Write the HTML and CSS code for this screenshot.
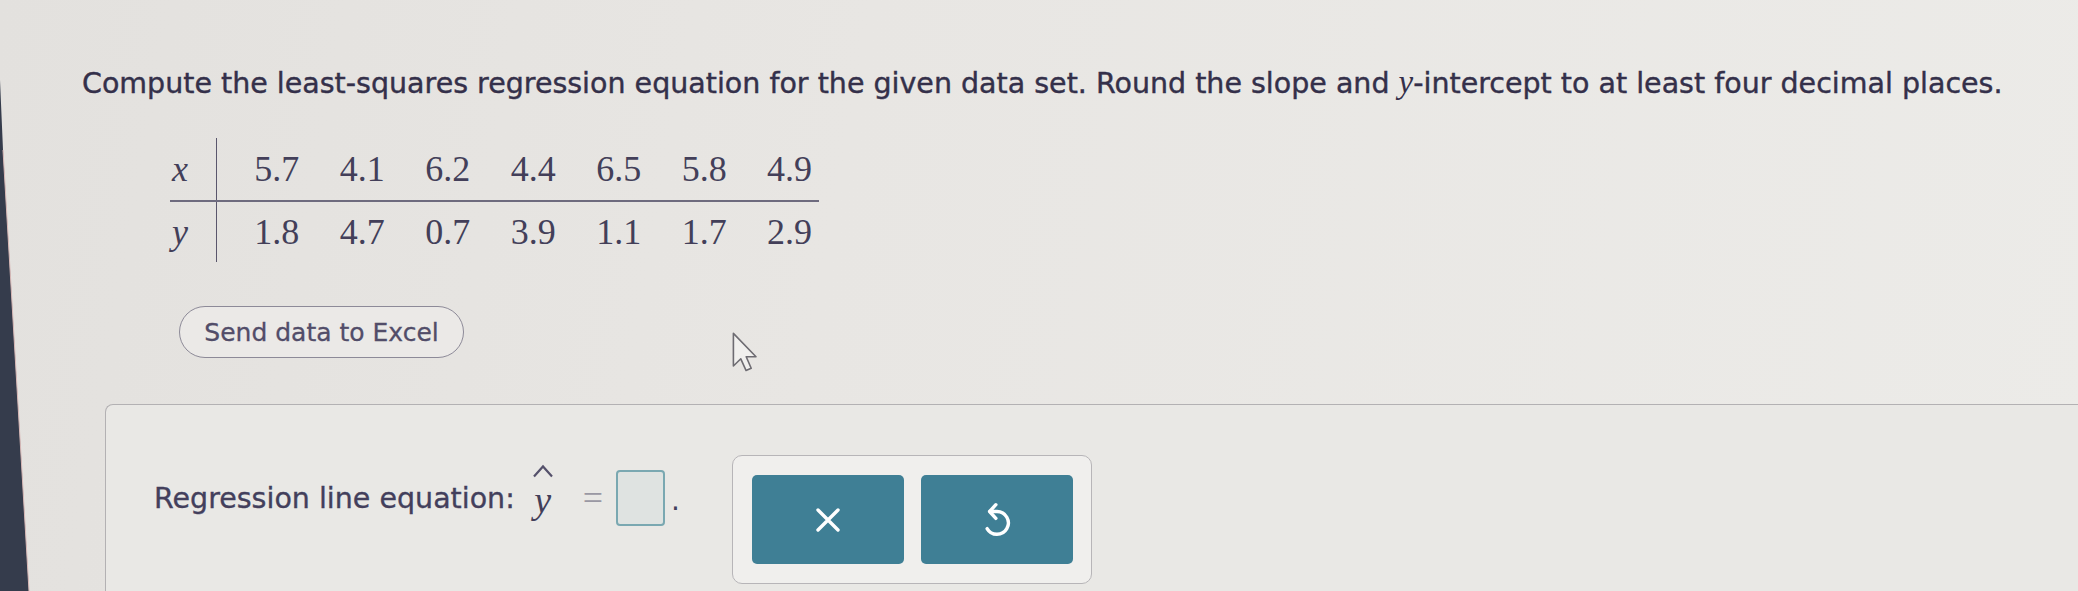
FILE: index.html
```html
<!DOCTYPE html>
<html lang="en">
<head>
<meta charset="utf-8">
<title>Regression</title>
<link rel="stylesheet" href="styles.css">
</head>
<body>
<div class="page">
  <p class="prompt">Compute the least-squares regression equation for the given data set. Round the slope and <span class="var">y</span>-intercept to at least four decimal places.</p>

  <table class="data">
    <tr class="row-x">
      <td class="lab">x</td>
      <td class="v first">5.7</td><td class="v">4.1</td><td class="v">6.2</td><td class="v">4.4</td><td class="v">6.5</td><td class="v">5.8</td><td class="v last">4.9</td>
    </tr>
    <tr class="row-y">
      <td class="lab">y</td>
      <td class="v first">1.8</td><td class="v">4.7</td><td class="v">0.7</td><td class="v">3.9</td><td class="v">1.1</td><td class="v">1.7</td><td class="v last">2.9</td>
    </tr>
  </table>

  <button class="excel">Send data to Excel</button>

  <div class="panel">
    <div class="answer-row">
      <div class="eq">
        <span class="eq-label">Regression line equation:</span>
        <span class="yhat">
          <svg class="hat" width="22" height="14" viewBox="0 0 22 14"><path d="M2 12.5 L11 2.5 L20 12.5" fill="none" stroke="#55516b" stroke-width="2.2"/></svg>
          <span class="yvar">y</span>
        </span>
        <span class="equals">=</span>
        <span class="box"></span>
        <span class="dot">.</span>
      </div>
      <div class="btn-group">
        <button class="act" aria-label="Clear">
          <svg width="26" height="26" viewBox="0 0 26 26"><path d="M3 3 L23 23 M23 3 L3 23" stroke="#ffffff" stroke-width="3.4" stroke-linecap="round" fill="none"/></svg>
        </button>
        <button class="act" aria-label="Undo">
          <svg width="32" height="41" viewBox="0 0 28 36"><path d="M8 11 H14 A10 10 0 1 1 5.3 26" fill="none" stroke="#ffffff" stroke-width="3" stroke-linecap="round"/><path d="M13 5 L7.5 11 L13 17" fill="none" stroke="#ffffff" stroke-width="3" stroke-linecap="round" stroke-linejoin="round"/></svg>
        </button>
      </div>
    </div>
  </div>
</div>

<svg class="cursor" width="26" height="40" viewBox="0 0 13 20"><path d="M0.7 0.7 L0.7 17 L4.4 13.4 L7 19.2 L9.6 18.1 L7.1 12.4 L12 12.4 Z" fill="#f1f0ee" stroke="#6e6c72" stroke-width="0.8" stroke-linejoin="round"/></svg>

<svg class="bezel" width="40" height="591" viewBox="0 0 40 591"><polygon points="0,80 3,150 29,591 0,591" fill="#353c4c"/><polyline points="3,150 29,591" fill="none" stroke="#d8b8b6" stroke-width="1"/></svg>
</body>
</html>
```
FILE: styles.css
```css
html, body {
  margin: 0;
  padding: 0;
}
body {
  width: 2078px;
  height: 591px;
  overflow: hidden;
  position: relative;
  background: linear-gradient(100deg, #e3e1de 0%, #e8e6e3 40%, #ecebe8 100%);
  font-family: "DejaVu Sans", Verdana, sans-serif;
  color: #34304a;
}
.page {
  padding: 64px 0 0 82px;
}
.prompt {
  margin: 0;
  font-size: 28.5px;
  line-height: 36px;
  white-space: nowrap;
  color: #34304a;
  -webkit-text-stroke: 0.4px #34304a;
}
.var {
  font-family: "Liberation Serif", "Times New Roman", serif;
  font-style: italic;
  font-size: 33px;
  -webkit-text-stroke: 0;
}
.data {
  margin: 36px 0 0 88px;
  border-collapse: collapse;
  font-family: "Liberation Serif", "Times New Roman", serif;
  font-size: 36px;
  color: #433f59;
}
.data td {
  padding: 0;
  vertical-align: middle;
}
.row-x td {
  height: 62px;
  border-bottom: 2px solid #6e6b7e;
}
.row-y td {
  height: 60px;
}
.lab {
  width: 44px;
  padding-left: 2px !important;
  font-style: italic;
  text-align: left;
  border-right: 1.5px solid #5a566c;
  color: #433f59;
}
.v {
  width: 85.5px;
  text-align: center;
}
.v.first {
  padding-left: 17px !important;
}
.v.last {
  width: 65px;
  text-align: right;
  padding-right: 7px !important;
}
.excel {
  display: block;
  margin: 44px 0 0 97px;
  width: 285px;
  height: 52px;
  border: 1.5px solid #8d8a98;
  border-radius: 26px;
  background: #ebe9e7;
  font-family: "DejaVu Sans", Verdana, sans-serif;
  font-size: 25px;
  color: #524d69;
  -webkit-text-stroke: 0.3px #524d69;
  padding: 0;
}
.panel {
  margin: 46px -40px 0 23px;
  height: 240px;
  border: 1.5px solid #b3b1b3;
  border-right: none;
  border-radius: 8px 0 0 0;
  background: #e9e8e5;
  padding: 50px 0 0 48px;
}
.answer-row {
  display: flex;
  align-items: flex-start;
}
.eq {
  display: flex;
  align-items: center;
  height: 66px;
  margin-top: 10px;
}
.eq-label {
  font-size: 28.5px;
  color: #433f5c;
  -webkit-text-stroke: 0.35px #433f5c;
  white-space: nowrap;
}
.yhat {
  display: inline-flex;
  flex-direction: column;
  align-items: center;
  margin-left: 17px;
  margin-top: -16.5px;
}
.hat {
  display: block;
  margin-bottom: 7px;
}
.yvar {
  font-family: "Liberation Serif", "Times New Roman", serif;
  font-style: italic;
  font-size: 38px;
  line-height: 30px;
  color: #433f59;
}
.equals {
  margin-left: 29px;
  font-family: "Liberation Serif", "Times New Roman", serif;
  font-size: 36px;
  color: #9a98a3;
}
.box {
  margin-left: 13px;
  width: 45px;
  height: 52px;
  border: 2.5px solid #7aa8b1;
  border-radius: 4px;
  background: #dfe3e1;
}
.dot {
  margin-left: 6px;
  font-size: 28px;
  color: #433f5c;
  align-self: flex-end;
  margin-bottom: 14px;
}
.btn-group {
  margin-left: 52px;
  display: flex;
  gap: 17px;
  padding: 19px 18px 19px 19px;
  border: 1.5px solid #b7b5b8;
  border-radius: 10px;
  background: #f0efed;
}
.act {
  width: 152px;
  height: 89px;
  border: none;
  border-radius: 5px;
  background: #3f7f95;
  display: flex;
  align-items: center;
  justify-content: center;
  padding: 0;
}
.cursor {
  position: absolute;
  left: 732px;
  top: 332px;
}
.bezel {
  position: absolute;
  left: 0;
  top: 0;
}
```
